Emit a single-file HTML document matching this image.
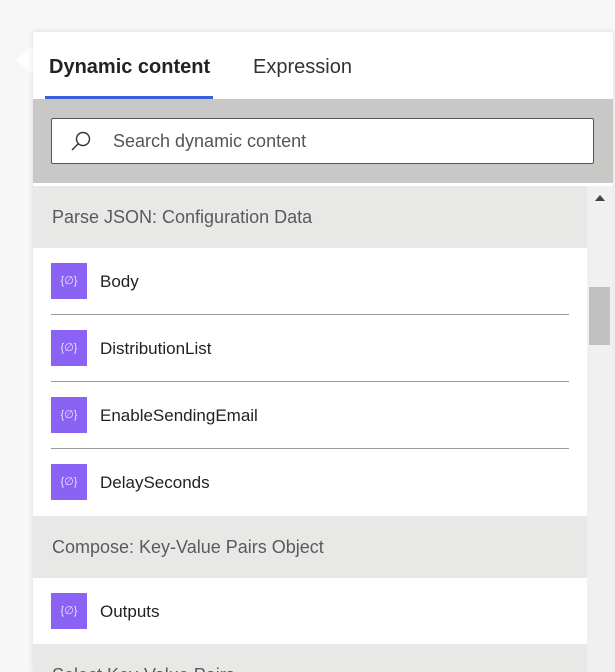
<!DOCTYPE html>
<html><head><style>
*{margin:0;padding:0;box-sizing:border-box}
body{width:615px;height:672px;overflow:hidden;background:#f7f7f7;font-family:"Segoe UI","Liberation Sans",sans-serif;position:relative}
.panel{position:absolute;left:33px;top:32px;width:580px;height:640px;background:#fff;box-shadow:0 0 6px rgba(0,0,0,.12);overflow:hidden}
.arrow{position:absolute;left:16px;top:45px;width:0;height:0;border-top:15px solid transparent;border-bottom:15px solid transparent;border-right:17px solid #fff}
.tab{position:absolute;top:24px;font-size:20px;color:#333}
.ul{position:absolute;left:12px;top:64px;width:168px;height:3px;background:#3b5fd8}
.band{position:absolute;left:0;top:67px;width:580px;height:84px;background:#c8c8c6}
.search{position:absolute;left:18px;top:19px;width:543px;height:46px;background:#fff;border:1px solid #555;border-radius:2px}
.search span{position:absolute;left:61px;top:12px;font-size:18px;color:#555}
.list{position:absolute;left:0;top:154px;width:554px;height:486px;overflow:hidden}
.hdr{height:62px;background:#e8e9e7;font-size:18px;color:#5a5a5a;padding:21px 0 0 19px;overflow:hidden}
.row{height:67px;position:relative;background:#fff}
.row .ic{position:absolute;left:18px;top:15px;width:36px;height:36px;background:#8a63f5;color:#e8e0ff;font-size:11px;text-align:center;line-height:36px}
.row .t{position:absolute;left:67px;top:24px;font-size:17px;color:#222;font-weight:500}
.row .d{position:absolute;left:18px;bottom:0;width:518px;height:1px;background:#9b9b9b}
.sb{position:absolute;left:554px;top:154px;width:26px;height:490px;background:#f0f0f0}
.sb .up{position:absolute;left:8px;top:9px;border-left:5px solid transparent;border-right:5px solid transparent;border-bottom:6px solid #444}
.sb .th{position:absolute;left:2px;top:101px;width:21px;height:58px;background:#c1c1c1}
</style></head><body>
<div class="arrow"></div>
<div class="panel">
<div class="tab" style="left:16px;color:#222;font-weight:600">Dynamic content</div>
<div class="tab" style="left:220px">Expression</div>
<div class="ul"></div>
<div class="band"><div class="search">
<svg style="position:absolute;left:17px;top:11px" width="24" height="24" viewBox="0 0 24 24"><circle cx="14" cy="9" r="6.5" fill="none" stroke="#333" stroke-width="1.4"/><line x1="9.5" y1="13.5" x2="3" y2="20" stroke="#333" stroke-width="1.4"/></svg>
<span>Search dynamic content</span></div></div>
<div class="list">
<div class="hdr">Parse JSON: Configuration Data</div>
<div class="row"><div class="ic">{∅}</div><div class="t">Body</div><div class="d"></div></div>
<div class="row"><div class="ic">{∅}</div><div class="t">DistributionList</div><div class="d"></div></div>
<div class="row"><div class="ic">{∅}</div><div class="t">EnableSendingEmail</div><div class="d"></div></div>
<div class="row"><div class="ic">{∅}</div><div class="t">DelaySeconds</div></div>
<div class="hdr">Compose: Key-Value Pairs Object</div>
<div class="row" style="height:66px"><div class="ic">{∅}</div><div class="t">Outputs</div></div>
<div class="hdr">Select Key-Value Pairs</div>
</div>
<div class="sb"><div class="up"></div><div class="th"></div></div>
</div>
</body></html>
